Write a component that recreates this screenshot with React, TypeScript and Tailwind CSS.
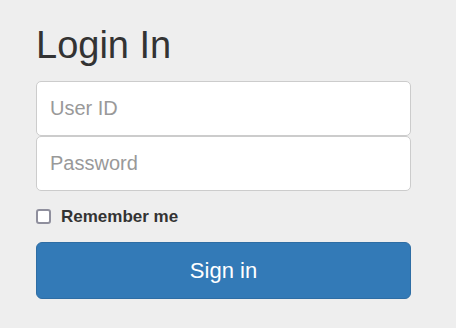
import React from 'react';

export default function App() {
  return (
    <div className="min-h-screen w-full bg-[#eeeeee] font-['Liberation_Sans',Arial,sans-serif]">
      <form className="w-[375px] ml-[36px] pt-[25px] flex flex-col">
        <h2 className="text-[38px] leading-[41px] text-[#333333] mb-[15px]">Login In</h2>
        <input
          type="text"
          placeholder="User ID"
          className="h-[55px] w-full bg-white border border-[#cccccc] rounded-[5px] px-[13px] text-[20px] text-[#555555] placeholder:text-[#999999] outline-none"
        />
        <input
          type="password"
          placeholder="Password"
          className="h-[55px] w-full bg-white border border-[#cccccc] rounded-[5px] px-[13px] text-[20px] text-[#555555] placeholder:text-[#999999] outline-none"
        />
        <label className="flex items-center gap-[10px] mt-[18px] h-[15px]">
          <span className="w-[15px] h-[15px] border-2 border-[#8f8f9d] rounded-[3px] bg-white" />
          <span className="text-[17px] font-bold text-[#333333]">Remember me</span>
        </label>
        <button
          type="button"
          className="mt-[18px] h-[57px] w-full bg-[#337ab7] border border-[#2e6da4] rounded-[6px] text-white text-[22px]"
        >
          Sign in
        </button>
      </form>
    </div>
  );
}
